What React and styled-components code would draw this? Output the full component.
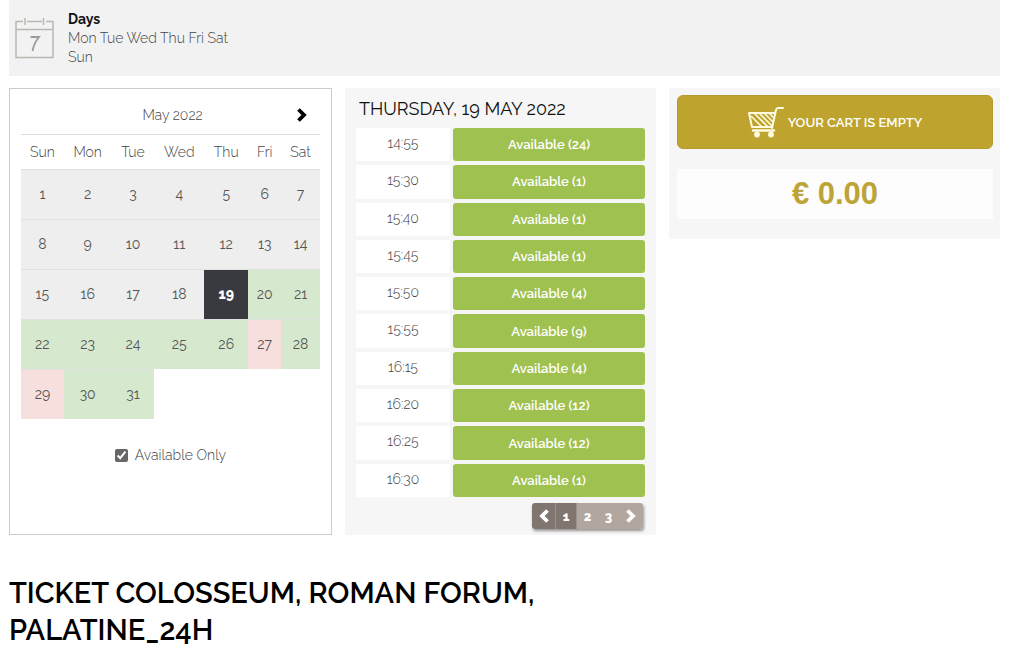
import React, { useState } from 'react'
import styled, { createGlobalStyle } from 'styled-components'

const GlobalStyle = createGlobalStyle`
  * {
    box-sizing: border-box;
  }
  body {
    margin: 0;
    background: #fff;
    color: #444;
    font-family: Raleway, Lato, "Open Sans", sans-serif;
    font-size: 14px;
    font-weight: 300;
  }
  button {
    font: inherit;
    border: 0;
    padding: 0;
    cursor: pointer;
  }
`;

const Page = styled.main`
  padding: 0 24px 0 9px;
`;

const DaysBar = styled.section`
  display: flex;
  gap: 14px;
  padding: 10px 6px 9px;
  margin-bottom: 12px;
  background: #f2f2f2;
  line-height: 19px;
  svg {
    margin-top: 7px;
    flex: none;
  }
`;

const DaysText = styled.div`
  max-width: 170px;
  strong {
    display: block;
    font-weight: 700;
    color: #111;
  }
`;

const Columns = styled.div`
  display: grid;
  grid-template-columns: 323fr 311fr 331fr;
  gap: 13px;
`;

const CalendarBox = styled.section`
  padding: 12px 11px;
  border: 1px solid #ccc;
  text-align: center;
`;

const MonthBar = styled.div`
  display: grid;
  grid-template-columns: 40px 1fr 36px;
  align-items: center;
  height: 34px;
  padding-bottom: 6px;
  border-bottom: 1px solid #ddd;
`;

const MonthButton = styled.button`
  grid-column: 3;
  display: flex;
  align-items: center;
  justify-content: center;
  height: 26px;
  background: none;
  color: #000;
`;

const MonthName = styled.span`
  grid-column: 2;
`;

const Month = styled.table`
  width: 100%;
  table-layout: fixed;
  border-collapse: collapse;
  th {
    height: 34px;
    padding: 0;
    font-weight: 300;
  }
`;

const dayColors = {
  past: '#eee',
  open: '#d6e9cf',
  full: '#f6dfdd',
  selected: '#393a3f',
};

const DayCell = styled.td`
  height: 50px;
  padding: 0;
  border-top: ${p => (p.$state ? '1px solid #e0e2df' : '0')};
  background: ${p => dayColors[p.$state] || 'none'};
`;

const DayButton = styled.button`
  display: block;
  width: 100%;
  height: 49px;
  background: none;
  font-weight: ${p => (p.$selected ? 800 : 400)};
  color: ${p => (p.$selected ? '#fff' : '#555')};
`;

const Filter = styled.label`
  display: flex;
  align-items: center;
  justify-content: center;
  gap: 7px;
  margin-top: 28px;
  input {
    margin: 0;
    width: 13px;
    height: 13px;
    accent-color: #666;
  }
`;

const SlotsBox = styled.section`
  padding: 8px 11px 6px;
  background: #f6f6f6;
  h2 {
    margin: 0 0 6px 3px;
    font-size: 18px;
    font-weight: 400;
    line-height: 26px;
    color: #111;
  }
`;

const Slots = styled.ul`
  display: grid;
  grid-auto-rows: 1fr;
  gap: 4px;
  min-height: 369px;
  margin: 0;
  padding: 0;
  list-style: none;
`;

const Slot = styled.li`
  display: grid;
  grid-template-columns: 94fr 192fr;
  gap: 3px;
`;

const Time = styled.time`
  padding-top: 6px;
  background: #fff;
  text-align: center;
  line-height: 19px;
`;

const SlotButton = styled.button`
  border-radius: 3px;
  background: #9fc14f;
  color: #fff;
  font-size: 13px;
  font-weight: 600;
`;

const Pager = styled.nav`
  display: flex;
  width: fit-content;
  margin: 6px 2px 0 auto;
  border-radius: 3px;
  overflow: hidden;
  box-shadow: 1px 2px 3px rgba(0, 0, 0, 0.4);
`;

const PageButton = styled.button`
  display: flex;
  align-items: center;
  justify-content: center;
  width: ${p => (p.$arrow ? 24 : 21)}px;
  height: 26px;
  border-right: ${p => (p.$dark ? '1px solid #9a9189' : '0')};
  background: ${p => (p.$dark ? '#80766f' : '#b1a79f')};
  color: #fff;
  font-size: 13px;
  font-weight: 800;
`;

const CartBox = styled.section`
  align-self: start;
  padding: 7px 7px 20px 8px;
  background: #f6f6f6;
`;

const CartButton = styled.button`
  display: flex;
  align-items: center;
  justify-content: center;
  gap: 4px;
  width: 100%;
  height: 54px;
  border: 1px solid #b39a2d;
  border-radius: 6px;
  background: #bea42e;
  color: #fff;
  font-size: 13px;
  font-weight: 600;
`;

const Total = styled.div`
  margin-top: 20px;
  background: #fdfdfd;
  color: #bca436;
  text-align: center;
  font-family: "Liberation Sans", Arial, sans-serif;
  font-size: 31px;
  font-weight: 700;
  line-height: 50px;
`;

const Title = styled.h1`
  max-width: 55%;
  margin: 40px 0 0;
  font-size: 29px;
  font-weight: 600;
  line-height: 37px;
  color: #000;
`;

const CalendarIcon = () => (
  <svg width="39" height="42" viewBox="0 0 39 42" fill="none" stroke="#b9b8b2" strokeWidth="1.5" aria-hidden="true">
    <path d="M8 4.5H1v36h37v-36h-7M12 4.5h15" />
    <path d="M1 12.5h37M10 1v7M28.500 1v7" />
    <path d="M15.500 20h8.500q-5 6-6.500 14" stroke="#9c9b97" strokeWidth="1.800" />
  </svg>
)

const CartIcon = () => (
  <svg width="36" height="32" viewBox="0 0 36 32" fill="none" stroke="#fffbe0" aria-hidden="true">
    <path d="M35 2h-5q-1.500 0-2 2l-4 18" strokeWidth="2" strokeLinecap="round" />
    <path d="M27 7H1l3 14h20" strokeWidth="2" strokeLinejoin="round" />
    <path d="M3 10l11 11M6 7l14 14M11 7l13 13M16 7l9 9M21 7l5 5" strokeWidth="1.600" />
    <path d="M5 24.500h21" strokeWidth="2.400" strokeLinecap="round" />
    <circle cx="9" cy="28.500" r="2.900" fill="#fffbe0" stroke="none" />
    <circle cx="23" cy="28.500" r="2.900" fill="#fffbe0" stroke="none" />
  </svg>
)

const Chevron = ({ left }) => (
  <svg width="12" height="14" viewBox="0 0 12 14" fill="none" stroke="currentColor" strokeWidth="3.800" aria-hidden="true">
    <path d={left ? 'M9.500 1.500L4 7l5.500 5.500' : 'M2.500 1.500L8 7l-5.500 5.500'} />
  </svg>
)

const weekDays = [
  { name: 'Sun', width: '14.3%' },
  { name: 'Mon', width: '16%' },
  { name: 'Tue', width: '14.3%' },
  { name: 'Wed', width: '16.7%' },
  { name: 'Thu', width: '14.7%' },
  { name: 'Fri', width: '11%' },
  { name: 'Sat', width: '13%' },
]

const slots = [
  { time: '14:55', places: 24 },
  { time: '15:30', places: 1 },
  { time: '15:40', places: 1 },
  { time: '15:45', places: 1 },
  { time: '15:50', places: 4 },
  { time: '15:55', places: 9 },
  { time: '16:15', places: 4 },
  { time: '16:20', places: 12 },
  { time: '16:25', places: 12 },
  { time: '16:30', places: 1 },
]

const weeks = [0, 1, 2, 3, 4].map(w => [1, 2, 3, 4, 5, 6, 7].map(d => w * 7 + d))
const fullDays = [27, 29]

const App = () => {
  const [selected, setSelected] = useState(19)
  const [page, setPage] = useState(1)
  const [onlyAvailable, setOnlyAvailable] = useState(true)

  const dayState = (day) => {
    if (day > 31) return null
    if (day === selected) return 'selected'
    if (day < 19) return 'past'
    return fullDays.includes(day) ? 'full' : 'open'
  }

  return (
    <Page>
      <GlobalStyle />
      <DaysBar>
        <CalendarIcon />
        <DaysText>
          <strong>Days</strong>
          Mon Tue Wed Thu Fri Sat Sun
        </DaysText>
      </DaysBar>

      <Columns>
        <CalendarBox>
          <MonthBar>
            <MonthName>May 2022</MonthName>
            <MonthButton aria-label="Next month"><Chevron /></MonthButton>
          </MonthBar>
          <Month>
            <colgroup>
              {weekDays.map(d => <col key={d.name} width={d.width} />)}
            </colgroup>
            <thead>
              <tr>{weekDays.map(d => <th key={d.name} scope="col">{d.name}</th>)}</tr>
            </thead>
            <tbody>
              {weeks.map(week => (
                <tr key={week[0]}>
                  {week.map(day => {
                    const state = dayState(day)
                    return (
                      <DayCell key={day} $state={state}>
                        {state && (
                          <DayButton
                            $selected={state === 'selected'}
                            disabled={state === 'past' || state === 'full'}
                            onClick={() => setSelected(day)}
                          >
                            {day}
                          </DayButton>
                        )}
                      </DayCell>
                    )
                  })}
                </tr>
              ))}
            </tbody>
          </Month>
          <Filter>
            <input type="checkbox" checked={onlyAvailable} onChange={e => setOnlyAvailable(e.target.checked)} />
            Available Only
          </Filter>
        </CalendarBox>

        <SlotsBox>
          <h2>THURSDAY, 19 MAY 2022</h2>
          <Slots>
            {slots.map(slot => (
              <Slot key={slot.time}>
                <Time>{slot.time}</Time>
                <SlotButton>Available ({slot.places})</SlotButton>
              </Slot>
            ))}
          </Slots>
          <Pager aria-label="Pages">
            <PageButton $arrow $dark aria-label="Previous" onClick={() => setPage(Math.max(1, page - 1))}>
              <Chevron left />
            </PageButton>
            {[1, 2, 3].map(n => (
              <PageButton key={n} $dark={n === page} onClick={() => setPage(n)}>{n}</PageButton>
            ))}
            <PageButton $arrow aria-label="Next" onClick={() => setPage(Math.min(3, page + 1))}>
              <Chevron />
            </PageButton>
          </Pager>
        </SlotsBox>

        <CartBox>
          <CartButton>
            <CartIcon />
            YOUR CART IS EMPTY
          </CartButton>
          <Total>€ 0.00</Total>
        </CartBox>
      </Columns>

      <Title>TICKET COLOSSEUM, ROMAN FORUM, PALATINE_24H</Title>
    </Page>
  )
}

export default App
